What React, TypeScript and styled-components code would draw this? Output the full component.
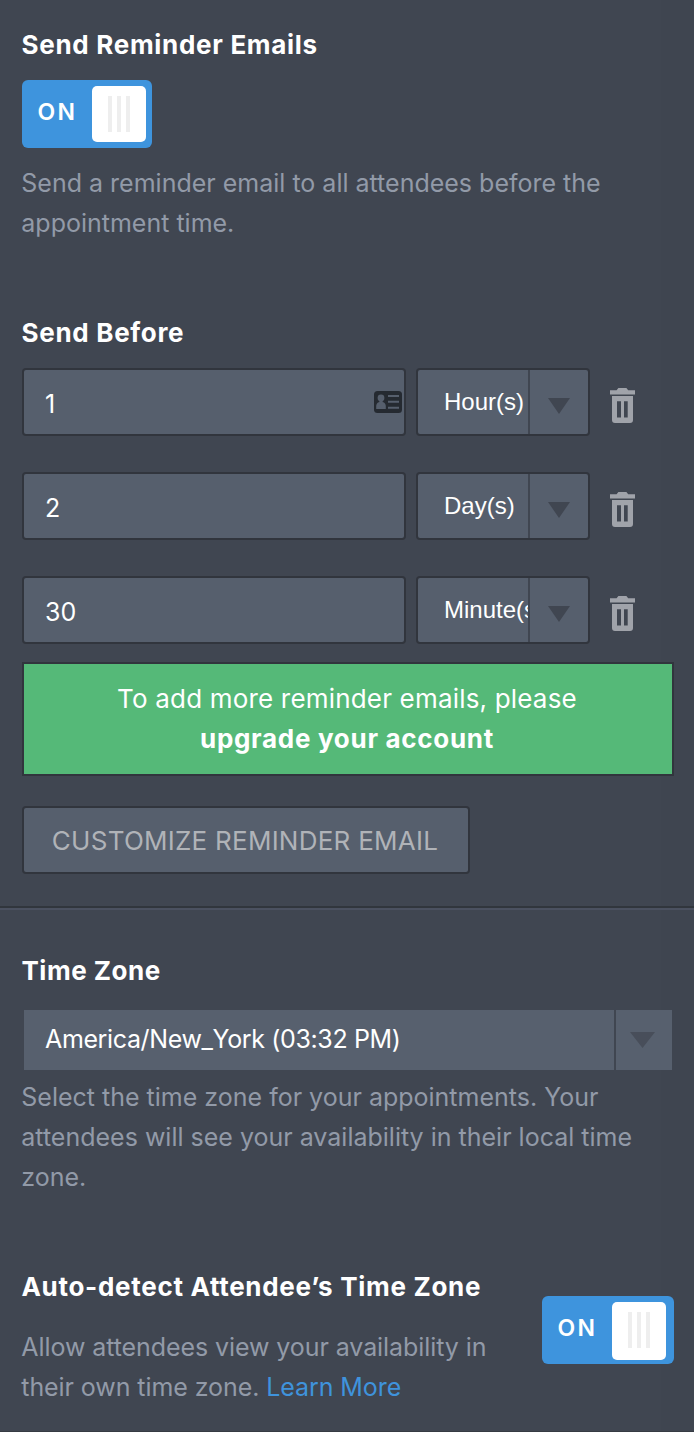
import React from "react";
import styled, { createGlobalStyle } from "styled-components";

const GlobalStyle = createGlobalStyle`
  *, *::before, *::after { box-sizing: border-box; }
  body {
    margin: 0;
    background: #404651;
    color: #fff;
    font-family: Inter, "Liberation Sans", sans-serif;
    -webkit-font-smoothing: antialiased;
  }
`;

const Panel = styled.main`
  width: 694px;
  height: 1432px;
  overflow: hidden;
  background: linear-gradient(to right, #404651 661px, #3f4550 661px);
  border-bottom: 1px solid #363b43;
`;

const Section = styled.section<{ $top: number; $height: number }>`
  height: ${(p) => p.$height}px;
  padding: ${(p) => p.$top}px 20px 0 22px;
`;

const Divider = styled.hr`
  height: 4px;
  margin: 0;
  border: 0;
  border-top: 2px solid #31363d;
  border-bottom: 2px solid #4b5160;
`;

const Heading = styled.h2<{ $gap: number; $tracking?: number }>`
  margin: 0 0 ${(p) => p.$gap}px -0.5px;
  font-size: 26px;
  line-height: 40px;
  font-weight: 700;
  letter-spacing: ${(p) => p.$tracking ?? 0.7}px;
  white-space: nowrap;
`;

const Help = styled.p<{ $top: number; $bottom?: number; $tracking?: number }>`
  margin: ${(p) => p.$top}px 0 ${(p) => p.$bottom ?? 0}px -0.7px;
  font-size: 25px;
  line-height: 40px;
  letter-spacing: ${(p) => p.$tracking ?? 0}px;
  color: #929aa8;
  white-space: nowrap;
`;

const Link = styled.a`
  color: #3f93dc;
`;

const Switch = styled.button<{ $wide?: boolean }>`
  display: flex;
  flex: none;
  align-items: flex-start;
  justify-content: space-between;
  width: ${(p) => (p.$wide ? 132 : 130)}px;
  height: 68px;
  padding: 6px ${(p) => (p.$wide ? 8 : 6)}px 0 15.5px;
  border: 0;
  border-radius: 6px;
  background: #3e94dd;
  color: #fff;
  font: 600 23px/52px Inter, sans-serif;
  letter-spacing: 2.2px;
`;

const Knob = styled.span<{ $tall?: boolean }>`
  display: flex;
  gap: 5px;
  width: 54px;
  height: ${(p) => (p.$tall ? 58 : 56)}px;
  padding: 10px 0 0 16px;
  border-radius: 5px;
  background: #fff;
`;

const Grip = styled.i`
  width: 4px;
  height: 36px;
  background: #eee;
`;

const ReminderRow = styled.div`
  display: flex;
  align-items: center;
  height: 68px;
  margin-bottom: 36px;

  &:last-of-type { margin-bottom: 18px; }
`;

const Reminders = styled.div``;

const AmountField = styled.div`
  display: flex;
  align-items: center;
  justify-content: space-between;
  width: 384px;
  height: 68px;
  padding: 4px 2px 0 21px;
  border: 2px solid #31353d;
  border-radius: 4px;
  background: #565f6d;
  font-size: 25px;
`;

const UnitSelect = styled.div`
  display: flex;
  width: 174px;
  height: 68px;
  margin: 0 20px 0 10px;
  border: 2px solid #31353d;
  border-radius: 4px;
  background: #565f6d;
`;

const UnitLabel = styled.span`
  width: 110px;
  padding-left: 26px;
  overflow: hidden;
  font: 24px/64px "Liberation Sans", Arial, sans-serif;
  white-space: nowrap;
`;

const ArrowCell = styled.span<{ $drop: number; $shift?: number }>`
  display: flex;
  flex: 1;
  justify-content: center;
  padding: ${(p) => p.$drop}px ${(p) => p.$shift ?? 0}px 0 0;
  border-left: 2px solid #404651;
`;

const Upgrade = styled.div`
  height: 114px;
  padding: 15px 2px 0 0;
  border: 2px solid #31353d;
  background: #55b978;
  font-size: 26px;
  font-weight: 400;
  line-height: 40px;
  text-align: center;
  letter-spacing: 0.18px;
`;

const UpgradeLink = styled.strong`
  display: block;
  font-weight: 700;
  letter-spacing: 0.7px;
`;

const CustomizeButton = styled.button`
  width: 448px;
  height: 68px;
  margin-top: 30px;
  padding: 2px 2px 0 0;
  border: 2px solid #31353d;
  border-radius: 4px;
  background: #565f6d;
  color: #b0b3b8;
  font: 400 26px/60px Inter, sans-serif;
  letter-spacing: 0.25px;
  white-space: nowrap;
`;

const ZoneSelect = styled.div`
  display: flex;
  width: 648px;
  height: 60px;
  margin-left: 2px;
  background: #57606e;
`;

const ZoneLabel = styled.span`
  width: 590px;
  padding-left: 21px;
  font-size: 25px;
  line-height: 59px;
  letter-spacing: -0.37px;
`;

const SplitRow = styled.div`
  display: flex;
  justify-content: space-between;
`;

const Texts = styled.div``;

const SwitchSlot = styled.div`
  padding-top: 29px;
`;

const Arrow = ({ width = 22, color = "#404651" }: { width?: number; color?: string }) => (
  <svg width={width} height="16" viewBox="0 0 22 16" preserveAspectRatio="none">
    <path d="M0 0H22L11 16Z" fill={color} />
  </svg>
);

const TrashSvg = styled.svg`
  margin-top: 7px;
`;

const TrashIcon = () => (
  <TrashSvg width="26" height="36" viewBox="0 0 26 36">
    <path d="M0 2.3H6.6L8.4 0H16.4L18.2 2.3H25V6.5H0Z" fill="#a0a3aa" />
    <path
      fillRule="evenodd"
      d="M2 8H23V32Q23 35 20 35H5Q2 35 2 32ZM7 13.3V29.6H11V13.3ZM14 13.3V29.6H17.7V13.3Z"
      fill="#a0a3aa"
    />
  </TrashSvg>
);

const ContactSvg = styled.svg`
  margin-top: -4px;
`;

const ContactIcon = () => (
  <ContactSvg width="28" height="22" viewBox="0 0 28 22">
    <rect width="28" height="22" rx="3.5" fill="#252a31" />
    <g fill="#565f6d">
      <circle cx="7" cy="7" r="3.4" />
      <path d="M5.4 9H8.6V10.9Q11.8 11.8 11.8 15V18H2.2V15Q2.2 11.8 5.4 10.9Z" />
      <path d="M14 4H25V6H14ZM14 9.8H25V11.8H14ZM14 15.7H25V17.7H14Z" />
    </g>
  </ContactSvg>
);

const Toggle = ({ wide }: { wide?: boolean }) => (
  <Switch $wide={wide}>
    ON
    <Knob $tall={wide}>
      <Grip />
      <Grip />
      <Grip />
    </Knob>
  </Switch>
);

const reminders = [
  { amount: "1", unit: "Hour(s)", contact: true },
  { amount: "2", unit: "Day(s)" },
  { amount: "30", unit: "Minute(s)" },
];

export default function App() {
  return (
    <>
      <GlobalStyle />
      <Panel>
        <Section $top={25} $height={906}>
          <Heading $gap={15}>Send Reminder Emails</Heading>
          <Toggle />
          <Help $top={15} $bottom={70}>
            Send a reminder email to all attendees before the
            <br />
            appointment time.
          </Help>
          <Heading $gap={15}>Send Before</Heading>
          <Reminders>
            {reminders.map((r) => (
              <ReminderRow key={r.unit}>
                <AmountField>
                  {r.amount}
                  {r.contact && <ContactIcon />}
                </AmountField>
                <UnitSelect>
                  <UnitLabel>{r.unit}</UnitLabel>
                  <ArrowCell $drop={28}>
                    <Arrow />
                  </ArrowCell>
                </UnitSelect>
                <TrashIcon />
              </ReminderRow>
            ))}
          </Reminders>
          <Upgrade>
            To add more reminder emails, please
            <UpgradeLink>upgrade your account</UpgradeLink>
          </Upgrade>
          <CustomizeButton>CUSTOMIZE REMINDER EMAIL</CustomizeButton>
        </Section>
        <Divider />
        <Section $top={41} $height={521}>
          <Heading $gap={19} $tracking={0.5}>Time Zone</Heading>
          <ZoneSelect>
            <ZoneLabel>America/New_York (03:32 PM)</ZoneLabel>
            <ArrowCell $drop={22} $shift={4}>
              <Arrow width={25} color="#484e5a" />
            </ArrowCell>
          </ZoneSelect>
          <Help $top={7} $bottom={70}>
            Select the time zone for your appointments. Your
            <br />
            attendees will see your availability in their local time
            <br />
            zone.
          </Help>
          <SplitRow>
            <Texts>
              <Heading $gap={20}>Auto-detect Attendee’s Time Zone</Heading>
              <Help $top={0} $tracking={-0.08}>
                Allow attendees view your availability in
                <br />
                their own time zone. <Link>Learn More</Link>
              </Help>
            </Texts>
            <SwitchSlot>
              <Toggle wide />
            </SwitchSlot>
          </SplitRow>
        </Section>
      </Panel>
    </>
  );
}
